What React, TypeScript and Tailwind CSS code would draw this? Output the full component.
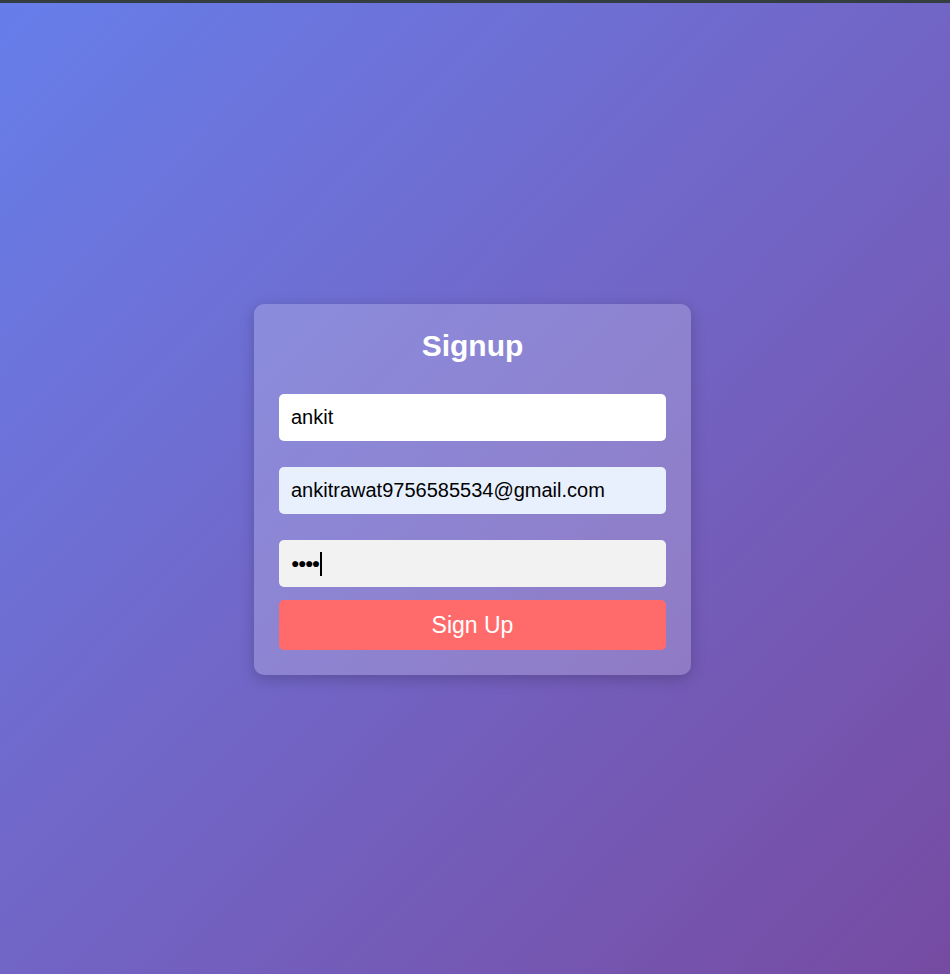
export default function App() {
  return (
    <div
      className="flex h-[974px] w-full items-center justify-center border-t-[3px] border-[#343d40] bg-gradient-to-br from-[#667eea] to-[#764ba2] pt-[2px] pr-[5px]"
      style={{ fontFamily: '"Liberation Sans", Arial, sans-serif' }}
    >
      <div className="flex w-[437px] flex-col rounded-[10px] bg-white/20 px-[25px] pt-[25px] pb-[25px] shadow-[0_4px_15px_rgba(0,0,0,0.2)]">
        <h2 className="mb-[32px] h-[33px] text-center text-[30px] font-bold leading-[33px] text-white">Signup</h2>
        <input
          type="text"
          defaultValue="ankit"
          className="mb-[26px] h-[47px] w-full rounded-[5px] bg-white px-[12px] text-[20px] text-black outline-none"
        />
        <input
          type="email"
          defaultValue="ankitrawat9756585534@gmail.com"
          className="mb-[26px] h-[47px] w-full rounded-[5px] bg-[#e8f0fe] px-[12px] text-[20px] text-black outline-none"
        />
        <div className="mb-[13px] flex h-[47px] w-full items-center rounded-[5px] bg-[#f2f2f2] px-[12px] text-black">
          <span className="text-[14px] tracking-[-1.5px]">●●●●</span>
          <span className="ml-[1px] h-[24px] w-[2px] bg-black" />
        </div>
        <button className="flex h-[50px] w-full items-center justify-center rounded-[5px] bg-[#ff6b6b] text-[23px] text-white">
          Sign Up
        </button>
      </div>
    </div>
  );
}
